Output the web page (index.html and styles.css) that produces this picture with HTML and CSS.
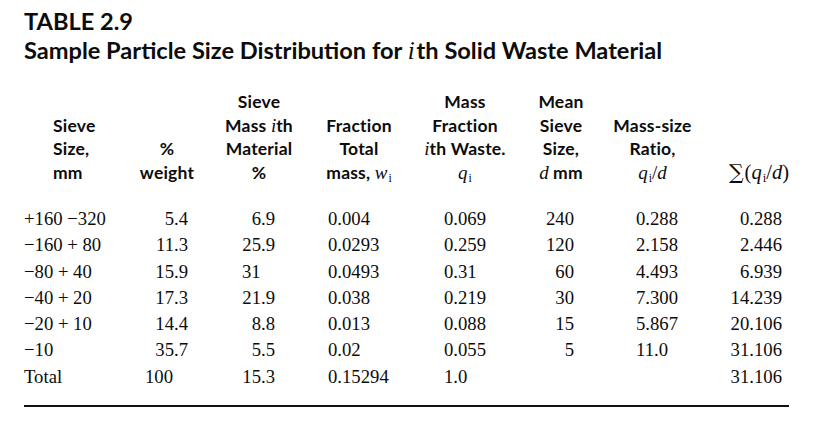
FILE: index.html
```html
<!DOCTYPE html>
<html>
<head>
<meta charset="utf-8">
<link rel="stylesheet" href="styles.css">
</head>
<body>
<div class="page">
  <h1 class="title">
    <span class="title-line">TABLE 2.9</span>
    <span class="title-line">Sample Particle Size Distribution for <span class="mi">i</span>th Solid Waste Material</span>
  </h1>
  <table class="data">
    <colgroup>
      <col class="c1"><col class="c2"><col class="c3"><col class="c4"><col class="c5"><col class="c6"><col class="c7"><col class="c8">
    </colgroup>
    <thead>
      <tr>
        <th class="h-left">Sieve<br>Size,<br>mm</th>
        <th>%<br>weight</th>
        <th>Sieve<br>Mass <span class="mi">i</span>th<br>Material<br>%</th>
        <th>Fraction<br>Total<br>mass, <span class="mi">w<sub>i</sub></span></th>
        <th>Mass<br>Fraction<br><span class="mi">i</span>th Waste.<br><span class="mi">q<sub>i</sub></span></th>
        <th>Mean<br>Sieve<br>Size,<br><span class="mi">d</span> mm</th>
        <th>Mass-size<br>Ratio,<br><span class="mi">q<sub>i</sub></span><span class="mr">/</span><span class="mi">d</span></th>
        <th class="h-right"><span class="sumexpr"><span class="mr sum">∑</span><span class="mr">(</span><span class="mi">q<sub>i</sub></span><span class="mr">/</span><span class="mi">d</span><span class="mr">)</span></span></th>
      </tr>
    </thead>
    <tbody>
      <tr><td class="d1">+160 &minus;320</td><td class="d2">5.4</td><td class="d3r">6.9</td><td class="d4">0.004</td><td class="d5">0.069</td><td class="d6">240</td><td class="d7">0.288</td><td class="d8">0.288</td></tr>
      <tr><td class="d1">&minus;160 + 80</td><td class="d2">11.3</td><td class="d3r">25.9</td><td class="d4">0.0293</td><td class="d5">0.259</td><td class="d6">120</td><td class="d7">2.158</td><td class="d8">2.446</td></tr>
      <tr><td class="d1">&minus;80 + 40</td><td class="d2">15.9</td><td class="d3l">31</td><td class="d4">0.0493</td><td class="d5">0.31</td><td class="d6">60</td><td class="d7">4.493</td><td class="d8">6.939</td></tr>
      <tr><td class="d1">&minus;40 + 20</td><td class="d2">17.3</td><td class="d3r">21.9</td><td class="d4">0.038</td><td class="d5">0.219</td><td class="d6">30</td><td class="d7">7.300</td><td class="d8">14.239</td></tr>
      <tr><td class="d1">&minus;20 + 10</td><td class="d2">14.4</td><td class="d3r">8.8</td><td class="d4">0.013</td><td class="d5">0.088</td><td class="d6">15</td><td class="d7">5.867</td><td class="d8">20.106</td></tr>
      <tr><td class="d1">&minus;10</td><td class="d2">35.7</td><td class="d3r">5.5</td><td class="d4">0.02</td><td class="d5">0.055</td><td class="d6">5</td><td class="d7">11.0</td><td class="d8">31.106</td></tr>
      <tr><td class="d1">Total</td><td class="d2 d2-total">100</td><td class="d3r">15.3</td><td class="d4">0.15294</td><td class="d5">1.0</td><td class="d6"></td><td class="d7"></td><td class="d8">31.106</td></tr>
    </tbody>
  </table>
  <div class="rule"></div>
</div>
</body>
</html>
```

FILE: styles.css
```css
html, body {
  margin: 0;
  padding: 0;
  background: #fff;
  color: #0c0c0c;
}

.page {
  width: 765px;
  padding: 7px 0 0 24px;
}

.title {
  margin: 0;
  font-family: Lato, "Open Sans", sans-serif;
  font-weight: 700;
  font-size: 23.6px;
  line-height: 29px;
}

.title-line {
  display: block;
}

.mi {
  font-family: "Liberation Serif", "DejaVu Serif", serif;
  font-style: italic;
  font-weight: 400;
}

.mi sub {
  font-style: normal;
  font-size: 0.62em;
  vertical-align: -0.3em;
  line-height: 0;
  margin-left: 1px;
}

.title .mi {
  font-size: 25px;
  margin-right: 2px;
}

.mr {
  font-family: "Liberation Serif", "DejaVu Serif", serif;
  font-weight: 400;
}

.sum {
  font-family: "DejaVu Serif", serif;
  font-size: 1.05em;
  margin-right: 1px;
}

.data {
  margin-top: 25px;
  border-collapse: collapse;
  table-layout: fixed;
  width: 765px;
}

.c1 { width: 102px; }
.c2 { width: 82px; }
.c3 { width: 102px; }
.c4 { width: 98px; }
.c5 { width: 114px; }
.c6 { width: 78px; }
.c7 { width: 105px; }
.c8 { width: 84px; }

.data th {
  font-family: Lato, "Open Sans", sans-serif;
  font-weight: 700;
  font-size: 17.5px;
  letter-spacing: 0.2px;
  line-height: 23.5px;
  text-align: center;
  vertical-align: bottom;
  padding: 0 0 22px 0;
  white-space: nowrap;
}

.data th .mi,
.data th .mr {
  font-size: 19px;
  letter-spacing: 0;
}

.data th .sumexpr .mi,
.data th .sumexpr .mr {
  font-size: 20.5px;
}

.data th.h-left {
  text-align: left;
  padding-left: 29px;
}

.data th.h-right {
  text-align: right;
  padding-right: 0;
}

.data td {
  font-family: "Liberation Serif", "Times New Roman", serif;
  font-size: 18.7px;
  line-height: 26.3px;
  padding: 0;
  white-space: nowrap;
}

.d1 { text-align: left; }
.d2 { text-align: right; padding-right: 20px !important; }
.d2-total { padding-right: 35px !important; }
.d3r { text-align: right; padding-right: 35px !important; }
.d3l { text-align: left; padding-left: 34px !important; }
.d4 { text-align: left; padding-left: 18px !important; }
.d5 { text-align: left; padding-left: 36px !important; }
.d6 { text-align: right; padding-right: 26px !important; }
.d7 { text-align: left; padding-left: 36px !important; }
.d8 { text-align: right; padding-right: 7px !important; }

.rule {
  margin-top: 15px;
  height: 0;
  border-top: 2px solid #111;
  width: 765px;
}
```
